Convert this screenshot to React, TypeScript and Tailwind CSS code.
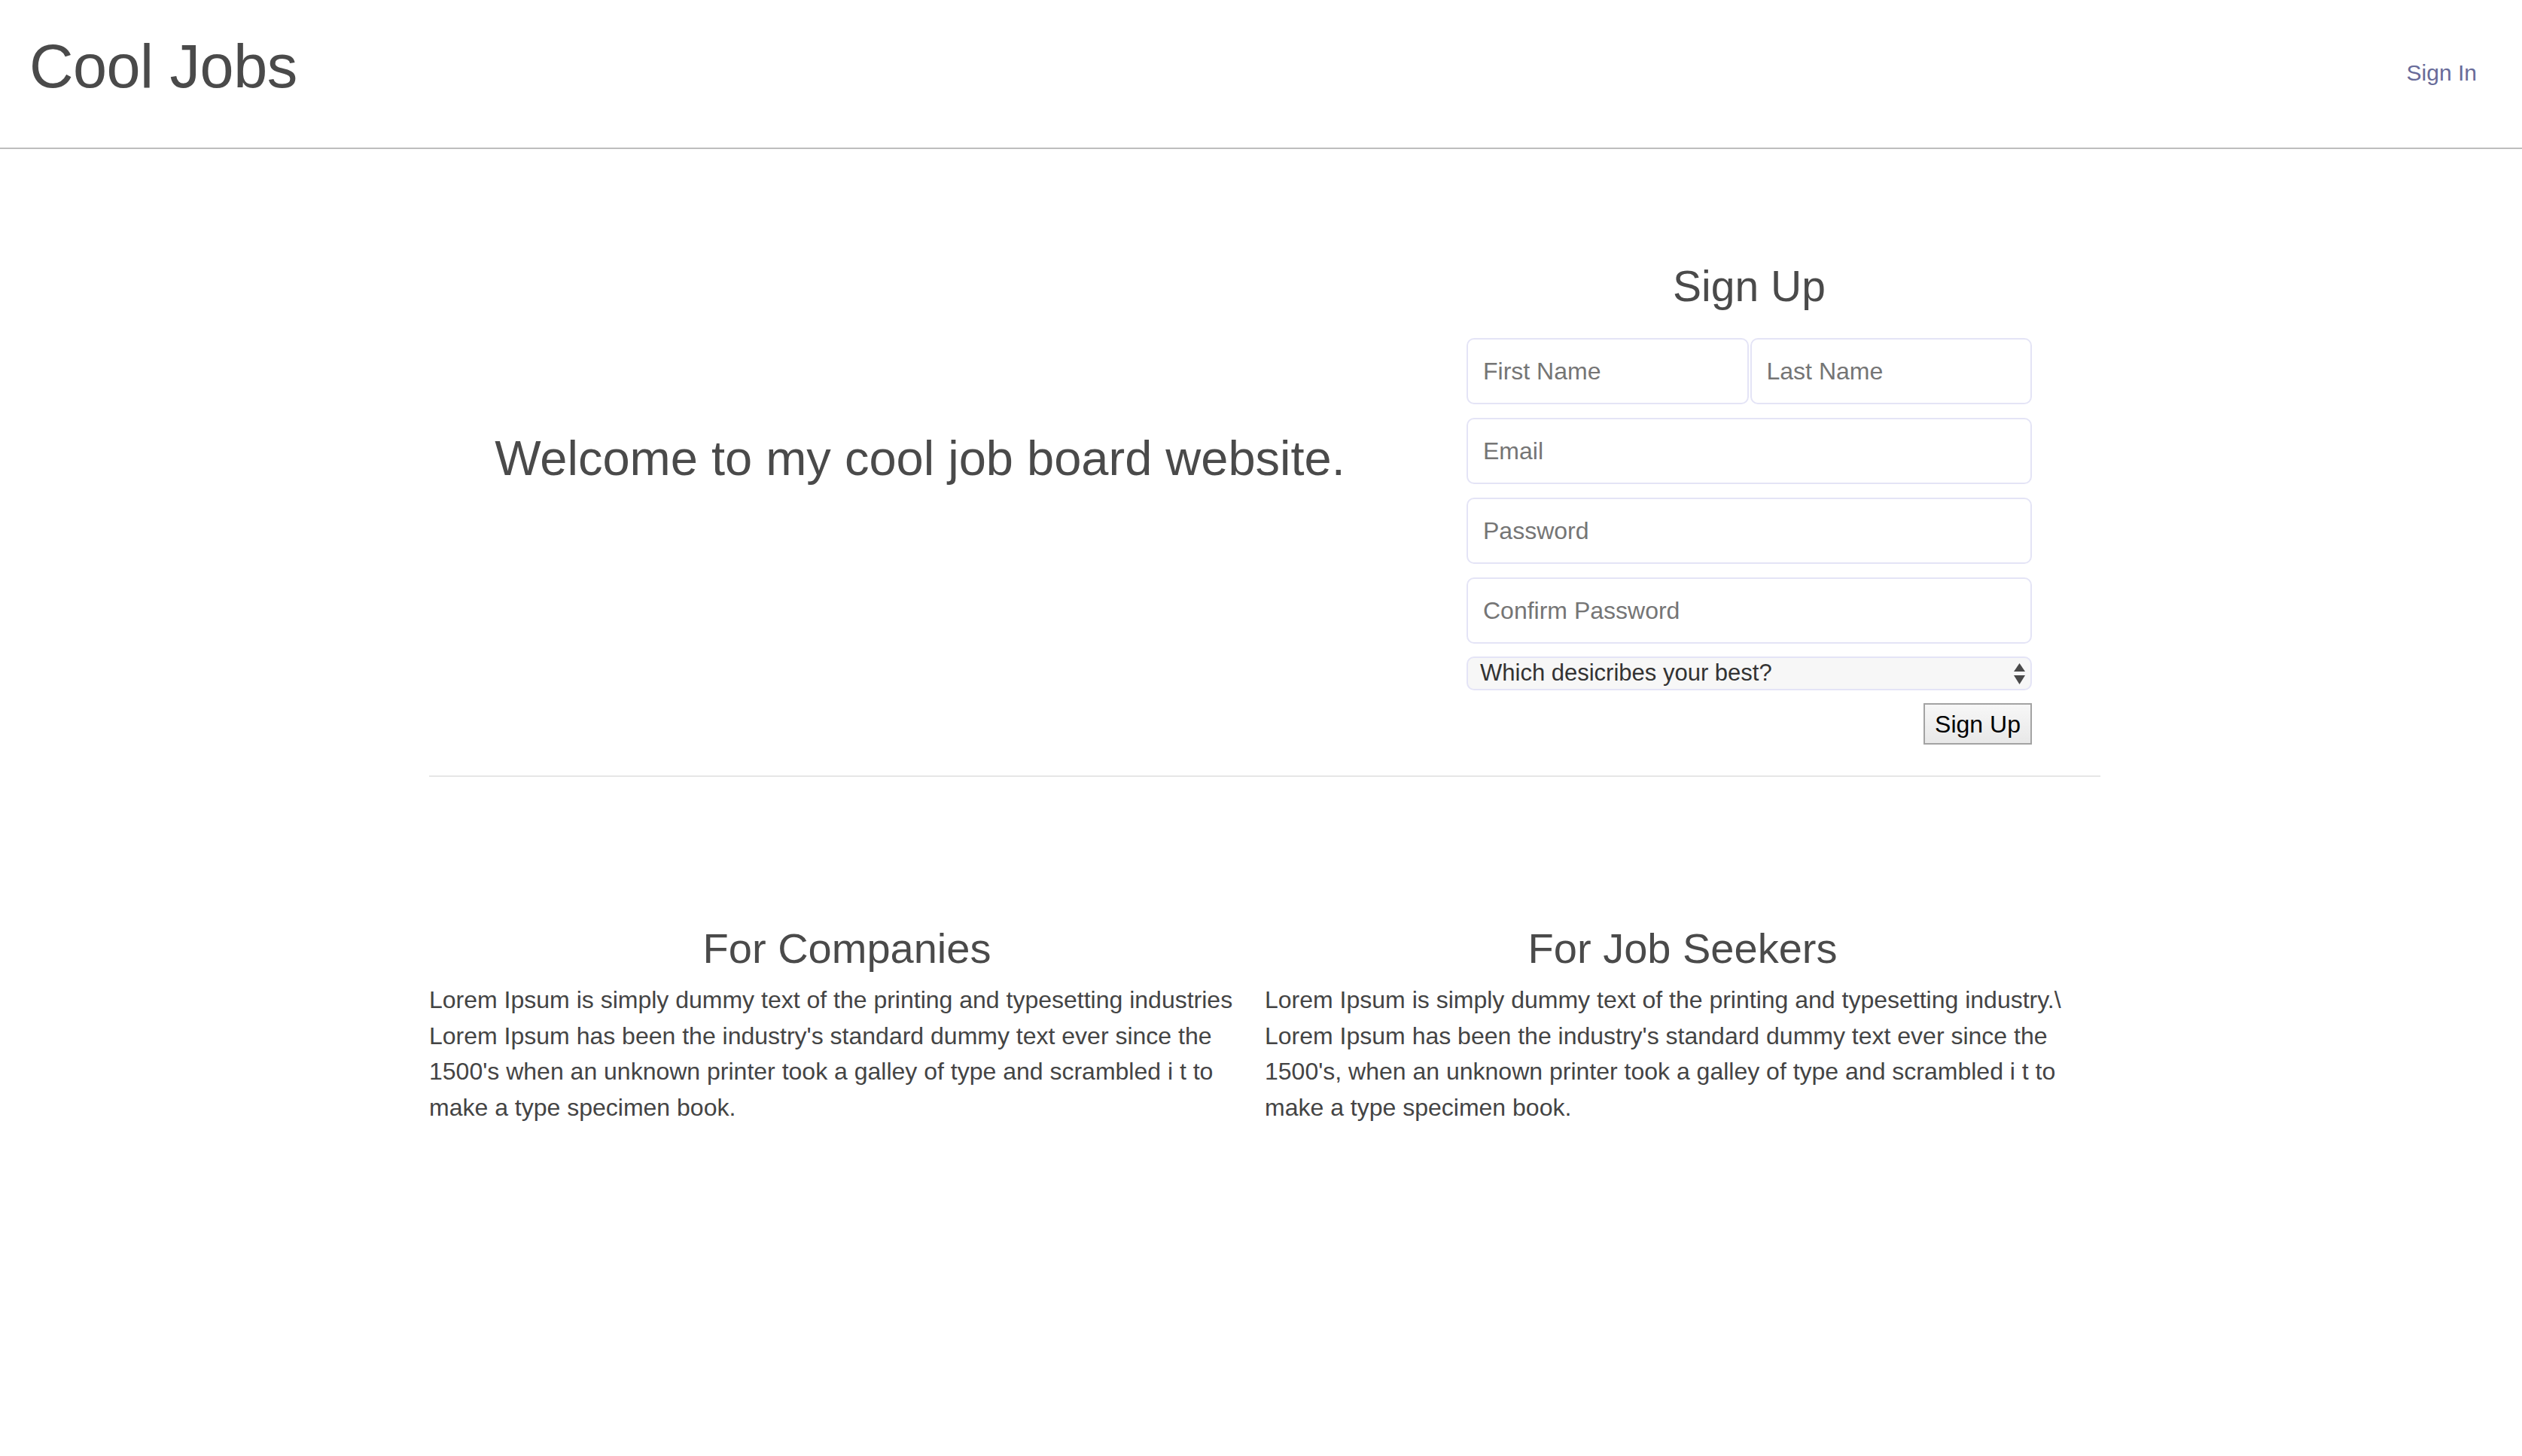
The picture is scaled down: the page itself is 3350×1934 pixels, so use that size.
import React from "react";

const font = { fontFamily: '"Liberation Sans", Arial, sans-serif' };

function Field({ placeholder, className = "" }: { placeholder: string; className?: string }) {
  return (
    <input
      type="text"
      placeholder={placeholder}
      className={
        "h-[88px] w-full rounded-[10px] border-2 border-[#e4e4f6] bg-white pl-[20px] text-[32px] text-[#333] placeholder:text-[#757575] outline-none " +
        className
      }
    />
  );
}

export default function App() {
  return (
    <div className="min-h-screen bg-white text-[#4a4a4a]" style={font}>
      <header className="flex h-[198px] items-center justify-between border-b-2 border-[#bdbdbd] pl-[39px] pr-[60px]">
        <h1 className="mb-[20px] text-[81px] font-light leading-none tracking-[-0.5px] text-[#4a4a4a]">Cool Jobs</h1>
        <a href="#" className="mb-[4px] text-[30px] text-[#686b99]">Sign In</a>
      </header>

      <main className="ml-[570px] w-[2220px]">
        <section className="grid grid-cols-[1304px_1fr] pt-[147px]">
          <div className="flex justify-center pt-[225px]">
            <p className="text-[65px] leading-[1.2] text-[#4a4a4a]">Welcome to my cool job board website.</p>
          </div>
          <div className="ml-[74px] flex w-[751px] flex-col">
            <h2 className="text-center text-[57px] font-light leading-[70px]">Sign Up</h2>
            <form className="mt-[34px] flex flex-col">
              <div className="flex gap-[2px]">
                <Field placeholder="First Name" />
                <Field placeholder="Last Name" />
              </div>
              <Field placeholder="Email" className="mt-[18px]" />
              <Field placeholder="Password" className="mt-[18px]" />
              <Field placeholder="Confirm Password" className="mt-[18px]" />
              <div className="mt-[17px] flex h-[45px] items-center justify-between rounded-[10px] border-2 border-[#e4e4f6] bg-[#f7f7f7] pl-[16px] pr-[7px]">
                <span className="text-[31px] text-[#333]">Which desicribes your best?</span>
                <svg width="15" height="28" viewBox="0 0 15 28" aria-hidden="true">
                  <polygon points="7.5,0 15,11 0,11" fill="#4a4a4a" />
                  <polygon points="0,16 15,16 7.5,28" fill="#4a4a4a" />
                </svg>
              </div>
              <button
                type="button"
                className="mt-[17px] h-[55px] w-[144px] self-end border-2 border-[#a3a3a3] bg-gradient-to-b from-[#f7f7f7] to-[#e8e8e8] text-[32px] text-black"
              >
                Sign Up
              </button>
            </form>
          </div>
        </section>

        <hr className="mt-[41px] border-0 border-t-2 border-[#e6e6e6]" />

        <section className="mt-[193px] grid grid-cols-2">
          <div>
            <h2 className="text-center text-[56px] font-light leading-[70px]">For Companies</h2>
            <p className="mt-[10px] pr-[30px] text-[32px] leading-[47.5px] text-[#444]">
              Lorem Ipsum is simply dummy text of the printing and typesetting industries Lorem Ipsum has been the industry's standard dummy text ever since the 1500's when an unknown printer took a galley of type and scrambled i t to make a type specimen book.
            </p>
          </div>
          <div>
            <h2 className="text-center text-[56px] font-light leading-[70px]">For Job Seekers</h2>
            <p className="mt-[10px] pr-[30px] text-[32px] leading-[47.5px] text-[#444]">
              Lorem Ipsum is simply dummy text of the printing and typesetting industry.\ Lorem Ipsum has been the industry's standard dummy text ever since the 1500's, when an unknown printer took a galley of type and scrambled i t to make a type specimen book.
            </p>
          </div>
        </section>
      </main>
    </div>
  );
}
